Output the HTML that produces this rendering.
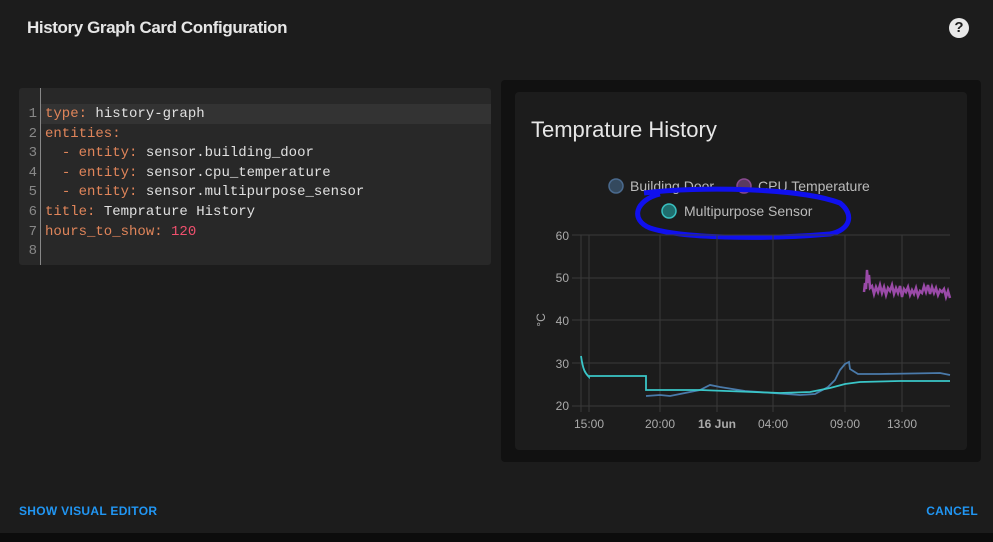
<!DOCTYPE html>
<html><head><style>
body{margin:0;width:993px;height:542px;background:#1c1c1c;overflow:hidden;font-family:"Liberation Sans",sans-serif;position:relative}
.t{position:absolute;left:27px;top:18px;font-size:17px;font-weight:bold;color:#e6e6e6;letter-spacing:-0.4px}
.help{position:absolute;left:949px;top:18px;width:20px;height:20px;border-radius:50%;background:#e8e8e8;color:#1c1c1c;font-weight:bold;font-size:15px;text-align:center;line-height:20px}
.ed{position:absolute;left:19px;top:88px;width:472px;height:177px;background:#282828;border-radius:3px}
.gut{position:absolute;left:21px;top:0;width:1px;height:177px;background:#888}
.act{position:absolute;left:22px;top:16px;width:450px;height:20px;background:#333}
.code{position:absolute;left:0;top:17px;font-family:"Liberation Mono",monospace;font-size:14px;line-height:19.6px;color:#e0e0e0;white-space:pre}
.ln{display:inline-block;width:18px;text-align:right;color:#888;margin-right:8px}
.k{color:#e0855a}.n{color:#f0506e}
.pv{position:absolute;left:501px;top:80px;width:480px;height:382px;background:#111;border-radius:4px}
.card{position:absolute;left:515px;top:92px;width:452px;height:358px;background:#1c1c1c;border-radius:4px}
.btn{position:absolute;top:504px;color:#2196f3;font-size:12px;font-weight:bold;letter-spacing:0.3px}
.strip{position:absolute;left:0;top:533px;width:993px;height:9px;background:#0c0c0c}
</style></head><body>
<div class="t">History Graph Card Configuration</div>
<div class="help">?</div>
<div class="ed"><div class="gut"></div><div class="act"></div>
<div class="code"><span class="ln">1</span><span class="k">type</span><span class="k">:</span> history-graph
<span class="ln">2</span><span class="k">entities:</span>
<span class="ln">3</span>  <span class="k">- entity:</span> sensor.building_door
<span class="ln">4</span>  <span class="k">- entity:</span> sensor.cpu_temperature
<span class="ln">5</span>  <span class="k">- entity:</span> sensor.multipurpose_sensor
<span class="ln">6</span><span class="k">title:</span> Temprature History
<span class="ln">7</span><span class="k">hours_to_show:</span> <span class="n">120</span>
<span class="ln">8</span></div></div>
<div class="pv"></div><div class="card"></div>
<svg width="993" height="542" style="position:absolute;left:0;top:0" font-family="Liberation Sans, sans-serif">
<text x="531" y="137" font-size="22" fill="#e6e6e6">Temprature History</text>
<circle cx="616" cy="186" r="7" fill="#34495e" stroke="#4a6a8e" stroke-width="1.5"/>
<text x="630" y="191" font-size="14" fill="#bbb">Building Door</text>
<circle cx="744" cy="186" r="7" fill="#5a3a60" stroke="#8a4a90" stroke-width="1.5"/>
<text x="758" y="191" font-size="14" fill="#bbb">CPU Temperature</text>
<circle cx="669" cy="211" r="7" fill="#1f6e6e" stroke="#39c0c0" stroke-width="1.5"/>
<text x="684" y="216" font-size="14" fill="#bbb">Multipurpose Sensor</text>
<path d="M644 193 C700 186 800 188 840 203 C855 215 850 230 830 234 C760 240 680 238 650 228 C630 220 635 200 660 194" fill="none" stroke="#1010ee" stroke-width="5"/>
<g stroke="#3a3a3a" stroke-width="1">
<path d="M572 235H950M572 278H950M572 320H950M572 363H950M572 406H950"/>
<path d="M581 235V412M589 235V412M660 235V412M717 235V412M773 235V412M845 235V412M902 235V412"/>
</g>
<g font-size="12" fill="#aaa" text-anchor="end">
<text x="569" y="240">60</text><text x="569" y="282">50</text><text x="569" y="325">40</text><text x="569" y="368">30</text><text x="569" y="410">20</text></g>
<text x="545" y="320" font-size="12" fill="#aaa" transform="rotate(-90 545 320)" text-anchor="middle">°C</text>
<g font-size="12" fill="#aaa" text-anchor="middle">
<text x="589" y="428">15:00</text><text x="660" y="428">20:00</text><text x="717" y="428" font-weight="bold">16 Jun</text><text x="773" y="428">04:00</text><text x="845" y="428">09:00</text><text x="902" y="428">13:00</text></g>
<path d="M646 396L660 395L670 396L680 394L700 390L710 385L720 387L745 391L800 395L815 394L828 387L835 380L840 370L845 364L849 362L850 369L858 374L880 374L940 373L950 375" fill="none" stroke="#4a7aaa" stroke-width="1.8"/>
<path d="M581 356C583 370 585 373 589 377L589 376L646 376L646 390L700 390L780 393L810 392L830 388L845 384L860 382L900 381L950 381" fill="none" stroke="#3ac6c8" stroke-width="1.8"/>
<path d="M864 292L865 283L866 289L867 270L868 283L869 275L870 288L872 286L874 294L876 287L878 292L880 285L882 293L884 287L886 295L888 288L890 291L892 285L894 294L896 288L898 293L900 286L902 297L904 289L906 292L908 287L910 295L912 290L914 294L916 288L918 296L920 291L922 293L924 286L926 292L928 285L930 294L932 287L934 293L936 288L938 295L940 290L942 292L944 289L946 297L948 291L950 298" fill="none" stroke="#9a4aa8" stroke-width="2.5"/>
</svg>
<div class="btn" style="left:19px">SHOW VISUAL EDITOR</div>
<div class="btn" style="right:15px">CANCEL</div>
<div class="strip"></div>
</body></html>
